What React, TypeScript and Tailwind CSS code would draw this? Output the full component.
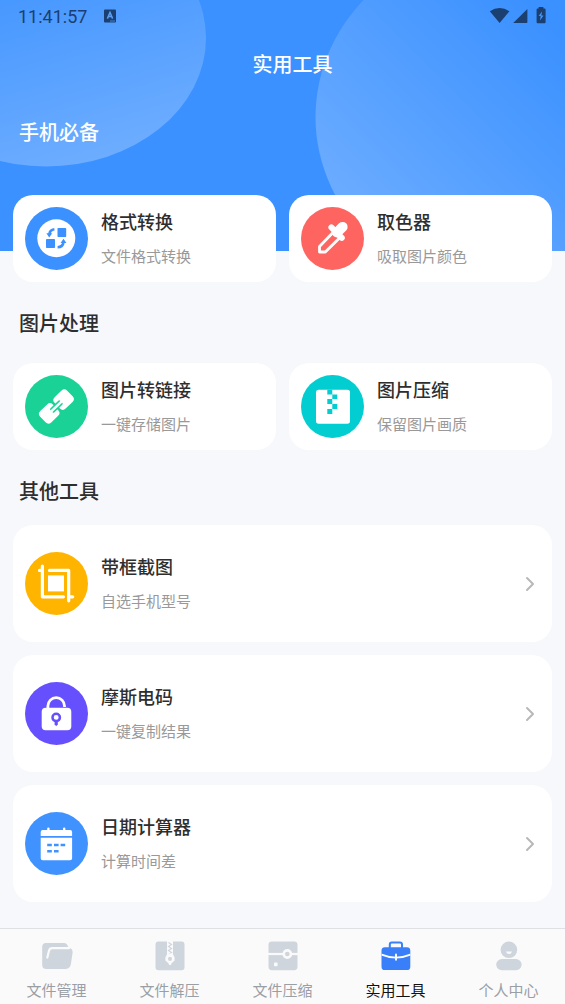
import { ReactNode } from 'react'
import { ChevronRight } from 'lucide-react'

interface Tool {
  id: string
  name: string
  desc: string
  icon: ReactNode
}

interface Tab {
  id: string
  label: string
  icon: ReactNode
}

const essentials: Tool[] = [
  {
    id: 'convert',
    name: '格式转换',
    desc: '文件格式转换',
    icon: (
      <>
        <circle cx="31.5" cy="31.5" r="31.5" fill="#3b91ff" />
        <circle cx="31.3" cy="31.3" r="19" fill="#fff" />
        <rect x="32.5" y="21" width="8.7" height="9" rx=".8" fill="#3b91ff" />
        <rect x="21" y="32" width="9" height="9" rx=".8" fill="#3b91ff" />
        <path d="M29.4 22.3Q24.6 22.8 24.4 27.5M32.6 40.2Q38 40 38.5 35" fill="none" stroke="#3b91ff" strokeWidth="2.6" />
        <path d="M21.4 26.2h5.8l-3 4.2zM35.6 36h5.8l-2.9-4.2z" fill="#3b91ff" />
      </>
    ),
  },
  {
    id: 'picker',
    name: '取色器',
    desc: '吸取图片颜色',
    icon: (
      <>
        <circle cx="31.5" cy="31.5" r="31.5" fill="#ff6560" />
        <g fill="none" stroke="#fff" strokeLinecap="round" strokeLinejoin="round">
          <path d="M32 25.5 18.5 39.4V45h5.8L38 31.5" strokeWidth="2.8" />
          <path d="M30.4 20.4 40.8 30.8" strokeWidth="6" />
          <path d="M36 25.5 41.6 19.9" strokeWidth="10" />
        </g>
      </>
    ),
  },
]

const imageTools: Tool[] = [
  {
    id: 'link',
    name: '图片转链接',
    desc: '一键存储图片',
    icon: (
      <>
        <circle cx="31.5" cy="31.5" r="31.5" fill="#1ad196" />
        <g transform="rotate(-44 31.4 31.5)">
          <rect x="12.6" y="23.6" width="17.6" height="15.8" rx="4" fill="#fff" />
          <rect x="32.6" y="23.6" width="17.6" height="15.8" rx="4" fill="#fff" />
          <rect x="24.6" y="28.6" width="13.6" height="5.8" rx="1.4" fill="#1ad196" />
          <rect x="24" y="30.2" width="14.8" height="2.6" fill="#fff" />
        </g>
      </>
    ),
  },
  {
    id: 'compress',
    name: '图片压缩',
    desc: '保留图片画质',
    icon: (
      <>
        <circle cx="31.5" cy="31.5" r="31.5" fill="#02ced1" />
        <rect x="15" y="14.7" width="34" height="34" rx="2.6" fill="#fff" />
        <path
          d="M26.3 14.7h5v4.7h-5zM31.3 19.4h5v4.7h-5zM26.3 24.1h5v4.8h-5zM31.3 28.9h5v5h-5zM26.3 33.9h5v5h-5z"
          fill="#02ced1"
        />
      </>
    ),
  },
]

const otherTools: Tool[] = [
  {
    id: 'frame',
    name: '带框截图',
    desc: '自选手机型号',
    icon: (
      <>
        <circle cx="31.5" cy="31.5" r="31.5" fill="#ffb400" />
        <g fill="none" stroke="#fff" strokeWidth="3.2" strokeLinecap="round" strokeLinejoin="round">
          <path d="M17.4 14v30.8h21M24.5 18.4h19.2v30.4" />
          <path d="M14.5 18.4h2.9M43.7 44.8h4" />
        </g>
        <rect x="23" y="23.4" width="16" height="16" fill="#fff" />
      </>
    ),
  },
  {
    id: 'morse',
    name: '摩斯电码',
    desc: '一键复制结果',
    icon: (
      <>
        <circle cx="31.5" cy="31.5" r="31.5" fill="#6650fd" />
        <path d="M22.9 27v-3a8.3 8.3 0 0 1 16.6 0v1" fill="none" stroke="#fff" strokeWidth="2.8" />
        <rect x="16.7" y="25.7" width="29.6" height="22.6" rx="4" fill="#fff" />
        <circle cx="31.2" cy="35.4" r="3.7" fill="none" stroke="#6650fd" strokeWidth="2.5" />
        <path d="M29.6 38.8h3.2v3.4l-1.6 2-1.6-2z" fill="#6650fd" />
      </>
    ),
  },
  {
    id: 'date',
    name: '日期计算器',
    desc: '计算时间差',
    icon: (
      <>
        <circle cx="31.5" cy="31.5" r="31.5" fill="#4093ff" />
        <path d="M17.7 18h27.4q2 0 2 2v4H15.7v-4q0-2 2-2z" fill="#fff" />
        <path d="M15.7 25.8h31.4v20.4q0 2-2 2H17.7q-2 0-2-2z" fill="#fff" />
        <path d="M23.4 16.6v3M39.2 16.6v3" stroke="#fff" strokeWidth="2.4" strokeLinecap="round" />
        <path d="M22.2 33h4.6M29 33h4.6M35.6 33h4.6M22.2 39.3h4.6M29 39.3h4.6" stroke="#4093ff" strokeWidth="2.4" />
      </>
    ),
  },
]

const tabs: Tab[] = [
  {
    id: 'files',
    label: '文件管理',
    icon: (
      <>
        <path
          d="M7 5h18q3 0 4.4 4.4 4.6.8 4.2 5.2l-1.6 11q-.8 5.4-5.3 5.4H7.5q-4.3 0-4.3-4.3V9Q3.2 5 7 5z"
          fill="#cfd5dc"
        />
        <path d="M8.3 19.6 10 12.8q.7-2.6 3.2-2.6H30" fill="none" stroke="#fafafa" strokeWidth="2.2" strokeLinecap="round" />
      </>
    ),
  },
  {
    id: 'unzip',
    label: '文件解压',
    icon: (
      <>
        <rect x="3.5" y="3.4" width="29" height="28.8" rx="3" fill="#cfd5dc" />
        <path d="M15 3h6v14h-6z" fill="#fafafa" />
        <path d="m16.5 4.5 3 2-3 2 3 2-3 2 3 2-3 2" fill="none" stroke="#cfd5dc" strokeWidth="1.2" />
        <path d="M15.4 15.4h5.2l2 4v3.2l-3 2.6-.8 1.8h-1.6l-.8-1.8-3-2.6v-3.2z" fill="#fafafa" />
        <rect x="16.2" y="19" width="3.6" height="3.8" rx="1" fill="#cfd5dc" />
      </>
    ),
  },
  {
    id: 'zip',
    label: '文件压缩',
    icon: (
      <>
        <rect x="3.5" y="3.4" width="29" height="28.8" rx="3.4" fill="#cfd5dc" />
        <path d="M3 16h30" stroke="#fafafa" strokeWidth="2.2" />
        <circle cx="22.3" cy="16" r="3.6" fill="#cfd5dc" stroke="#fafafa" strokeWidth="2.6" />
        <rect x="9" y="24.6" width="3.6" height="3.6" rx=".8" fill="#fafafa" />
      </>
    ),
  },
  {
    id: 'tools',
    label: '实用工具',
    icon: (
      <>
        <rect x="3.5" y="9.3" width="28.8" height="22.8" rx="3.4" fill="#397ffa" />
        <path d="M11.8 10V6.4q0-2 2-2h8.2q2 0 2 2V10" fill="none" stroke="#397ffa" strokeWidth="2" />
        <path d="M4.4 16.8q13.6 5.6 27.2 0M18 16.4v5.4" fill="none" stroke="#fff" strokeWidth="1.9" strokeLinecap="round" />
      </>
    ),
  },
  {
    id: 'me',
    label: '个人中心',
    icon: (
      <>
        <circle cx="17.9" cy="11.8" r="8.3" fill="#cfd5dc" />
        <rect x="5.2" y="21" width="25.4" height="11.2" rx="5.6" fill="#cfd5dc" />
        <path d="M15 13.4h6q-.6 2.6-3 2.6t-3-2.6z" fill="#fafafa" />
      </>
    ),
  },
]

function HeaderBackground() {
  return (
    <svg
      className="absolute inset-x-0 top-0 h-[251px] w-full bg-[#3b91ff]"
      viewBox="0 0 565 251"
      preserveAspectRatio="none"
      aria-hidden="true"
    >
      <defs>
        <linearGradient id="left-glow" x1=".35" y1=".2" x2=".65" y2="1">
          <stop offset="0" stopColor="#fff" stopOpacity=".02" />
          <stop offset="1" stopColor="#fff" stopOpacity=".26" />
        </linearGradient>
        <linearGradient id="right-glow" gradientUnits="userSpaceOnUse" x1="340" y1="210" x2="540" y2="10">
          <stop offset="0" stopColor="#fff" stopOpacity=".25" />
          <stop offset="1" stopColor="#fff" stopOpacity="0" />
        </linearGradient>
      </defs>
      <ellipse cx="46" cy="38" rx="160" ry="128.5" fill="url(#left-glow)" />
      <ellipse cx="515.5" cy="117" rx="200" ry="180" fill="url(#right-glow)" />
    </svg>
  )
}

function StatusBar() {
  return (
    <div className="flex h-8 items-center px-[18px] text-[#1b3f70]">
      <span className="font-[Roboto] text-[18px]">11:41:57</span>
      <svg className="ml-4 size-[14px]" viewBox="0 0 14 14" aria-hidden="true">
        <rect x="1" y=".5" width="12" height="13" rx="1" fill="currentColor" />
        <path d="M4.4 9.6 7 3.4l2.6 6.2M5.3 7.6h3.4" fill="none" stroke="#5b9ff5" strokeWidth="1.5" />
        <path d="M7 12h5" stroke="#5b9ff5" strokeWidth=".7" />
      </svg>
      <svg className="ml-auto h-[18px] w-[58px]" viewBox="0 0 58 18" fill="currentColor" aria-hidden="true">
        <path d="M.8 4.2Q10.6-2.4 20.4 4.2L10.6 16z" />
        <path d="M38.4 2v13.2q0 .8-.8.8H24.2z" />
        <path d="M48.6 1.6h1V-.2h4.8v1.8h1.2q1 0 1 1v12.6q0 1-1 1h-7q-1 0-1-1V2.6q0-1 1-1z" />
        <path d="M53 4.4 49.6 9h2l-.6 4.4 3.6-5h-2.2z" fill="#4394fb" />
      </svg>
    </div>
  )
}

function ToolInfo({ tool }: { tool: Tool }) {
  return (
    <>
      <svg className="size-[63px] shrink-0" viewBox="0 0 63 63" aria-hidden="true">
        {tool.icon}
      </svg>
      <span className="flex min-w-0 flex-1 flex-col gap-[13px] pb-[2px]">
        <span className="text-[18px] leading-6 font-medium text-[#2e2e2e]">{tool.name}</span>
        <span className="text-[15px] leading-5 text-[#999999]">{tool.desc}</span>
      </span>
    </>
  )
}

function ToolGrid({ tools }: { tools: Tool[] }) {
  return (
    <div className="grid grid-cols-2 gap-[13px]">
      {tools.map((tool) => (
        <button key={tool.id} type="button" className="flex items-center gap-[13px] rounded-[20px] bg-white p-3 text-left">
          <ToolInfo tool={tool} />
        </button>
      ))}
    </div>
  )
}

export default function App() {
  const activeTab = 'tools'

  return (
    <div className="relative flex min-h-screen flex-col bg-[#f7f8fc] font-['Noto_Sans_CJK_SC',sans-serif]">
      <HeaderBackground />

      <header className="relative">
        <StatusBar />
        <h1 className="py-4 pl-5 text-center text-[20px] leading-8 font-medium text-white">实用工具</h1>
      </header>

      <main className="relative px-[13px] pb-[26px]">
        <section>
          <h2 className="px-[6px] pt-5 pb-[47px] text-[20px] leading-8 font-medium text-white">手机必备</h2>
          <ToolGrid tools={essentials} />
        </section>

        <section>
          <h2 className="px-[6px] pt-[25px] pb-6 text-[20px] leading-8 font-medium text-[#2e2e2e]">图片处理</h2>
          <ToolGrid tools={imageTools} />
        </section>

        <section>
          <h2 className="px-[6px] pt-[25px] pb-[18px] text-[20px] leading-8 font-medium text-[#2e2e2e]">其他工具</h2>
          <div className="flex flex-col gap-[13px]">
            {otherTools.map((tool) => (
              <button
                key={tool.id}
                type="button"
                className="flex items-center gap-[13px] rounded-[20px] bg-white px-3 py-[27px] text-left"
              >
                <ToolInfo tool={tool} />
                <ChevronRight className="-mr-[2px] size-6 text-[#b8b8b8]" strokeWidth={2} />
              </button>
            ))}
          </div>
        </section>
      </main>

      <nav className="sticky bottom-0 mt-auto grid grid-cols-5 border-t border-[#dfe0e4] bg-[#fafafa] pt-[9px] pb-[2px]">
        {tabs.map((tab) => (
          <a
            key={tab.id}
            href={`#${tab.id}`}
            className={`flex flex-col items-center gap-1 text-[15px] leading-6 ${
              tab.id === activeTab ? 'text-[#111111]' : 'text-[#9a9fa6]'
            }`}
          >
            <svg className="size-9" viewBox="0 0 36 36" aria-hidden="true">
              {tab.icon}
            </svg>
            {tab.label}
          </a>
        ))}
      </nav>
    </div>
  )
}
